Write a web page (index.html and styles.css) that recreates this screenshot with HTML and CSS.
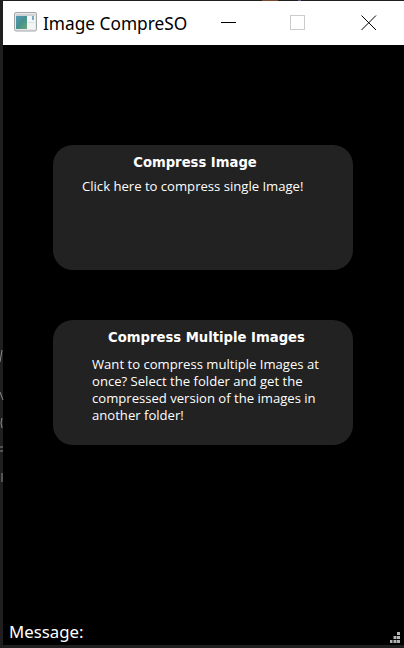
FILE: index.html
```html
<!DOCTYPE html>
<html>
<head>
    <meta charset="utf-8">
    <title>Image CompreSO</title>
    <link rel="stylesheet" href="styles.css">
</head>
<body>
<div class="window">
    <div class="titlebar">
        <svg class="app-icon" width="23" height="20" viewBox="0 0 23 20">
            <defs>
                <linearGradient id="pic" x1="0" y1="0" x2="1" y2="1">
                    <stop offset="0" stop-color="#5a9ab8"/>
                    <stop offset="0.5" stop-color="#45918f"/>
                    <stop offset="1" stop-color="#6aa878"/>
                </linearGradient>
            </defs>
            <rect x="0.5" y="0.5" width="22" height="18.500" rx="1.500" fill="#e6e8e9" stroke="#a2a6a9"/>
            <rect x="2" y="2" width="19" height="2" fill="#cfd3d5"/>
            <rect x="2" y="4" width="11" height="13" fill="url(#pic)"/>
            <rect x="13" y="4" width="8" height="13" fill="#f4f5f5"/>
            <rect x="18" y="4" width="2" height="4" fill="#7fa9bd"/>
            <rect x="14" y="10" width="6" height="1" fill="#dfe2e3"/>
        </svg>
        <span class="title">Image CompreSO</span>
        <div class="controls">
            <svg class="control" width="16" height="16" viewBox="0 0 16 16">
                <path d="M0 7.500H15" stroke="#000" fill="none"/>
            </svg>
            <svg class="control" width="16" height="16" viewBox="0 0 16 16">
                <rect x="0.5" y="0.5" width="14" height="14" stroke="#cccccc" fill="none"/>
            </svg>
            <svg class="control close" width="16" height="16" viewBox="0 0 16 16">
                <path d="M0.500 0.500L15 15M15 0.500L0.500 15" stroke="#000" fill="none"/>
            </svg>
        </div>
    </div>
    <div class="content">
        <div class="card">
            <div class="card-title">Compress Image</div>
            <div class="card-text single">Click here to compress single Image!</div>
        </div>
        <div class="card">
            <div class="card-title multi">Compress Multiple Images</div>
            <div class="card-text multiple">Want to compress multiple Images at once? Select the folder and get the compressed version of the images in another folder!</div>
        </div>
    </div>
    <div class="statusbar">
        <span class="message">Message:</span>
        <svg class="grip" width="10" height="11" viewBox="0 0 10 11">
            <path d="M7 0h3v3H7zM3.500 4h3v3h-3zM7 4h3v3H7zM0 8h2.500v3H0zM3.500 8h3v3h-3zM7 8h3v3H7z" fill="#b4b4b4"/>
        </svg>
    </div>
    <!-- bits of the desktop showing past the window edge -->
    <svg class="edge-bits" width="404" height="648" viewBox="0 0 404 648">
        <path d="M2 350L0 362M0 392L3 400M2 418L1 423L2 428M0 447H3M0 451H3M2 473V482" stroke="#8a8a8a" fill="none"/>
        <path d="M262 0.500H278" stroke="#7a4a30" fill="none"/>
        <path d="M298 0.500H301" stroke="#5a5a90" fill="none"/>
    </svg>
</div>
</body>
</html>
```
FILE: styles.css
```css
* {
    box-sizing: border-box;
}

html, body {
    margin: 0;
    height: 100%;
    background-color: #1f1f1f;
}

.window {
    position: relative;
    height: 648px;
    padding: 1px 0 3px 3px;
    display: flex;
    flex-direction: column;
    overflow: hidden;
}

.edge-bits {
    position: absolute;
    left: 0;
    top: 0;
}

.titlebar {
    height: 44px;
    flex: none;
    background-color: #ffffff;
    display: flex;
    align-items: center;
    padding-left: 11px;
}

.app-icon {
    margin-right: 6px;
    margin-top: -2px;
}

.title {
    font-family: "Noto Sans", "Open Sans", sans-serif;
    font-size: 17.300px;
    color: #000000;
}

.controls {
    margin-left: auto;
    display: flex;
    align-items: center;
    gap: 53px;
    padding-right: 27px;
}

.control {
    display: block;
}

.control.close {
    margin-left: 2px;
}

.content {
    flex: 1;
    background-color: #000000;
    padding: 100px 0 0 50px;
    display: flex;
    flex-direction: column;
    gap: 50px;
}

.card {
    width: 300px;
    height: 125px;
    flex: none;
    background-color: #222222;
    border-radius: 20px;
    color: #ffffff;
}

.card-title {
    font-family: "DejaVu Sans", sans-serif;
    font-weight: bold;
    font-size: 13.200px;
    line-height: 17px;
    text-align: center;
    padding-top: 9px;
    padding-right: 16px;
}

.card-title.multi {
    padding-right: 0;
    padding-left: 7px;
}

.card-text {
    font-family: "Open Sans", sans-serif;
    font-size: 13.100px;
    line-height: 17px;
}

.card-text.single {
    padding: 7px 0 0 29px;
}

.card-text.multiple {
    padding: 10px 20px 0 39px;
}

.statusbar {
    height: 30px;
    flex: none;
    background-color: #000000;
    display: flex;
    align-items: flex-end;
    justify-content: space-between;
    padding: 0 4px 2px 6px;
}

.message {
    font-family: "Noto Sans", "Open Sans", sans-serif;
    font-size: 16.800px;
    line-height: 22px;
    color: #ffffff;
}

.grip {
    display: block;
}
```
